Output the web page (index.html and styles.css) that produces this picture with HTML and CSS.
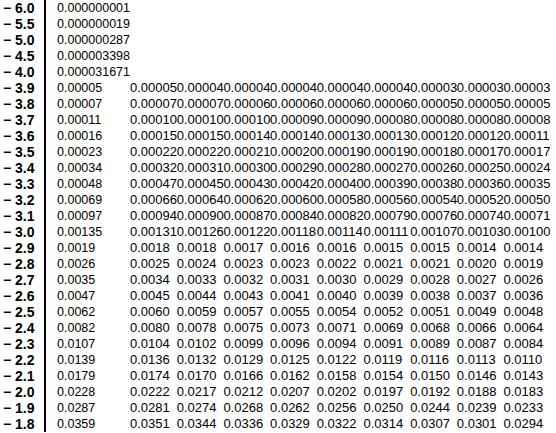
FILE: index.html
```html
<!DOCTYPE html>
<html>
<head>
<meta charset="utf-8">
<link rel="stylesheet" href="styles.css">
</head>
<body>
<div class="ztable" id="zt"></div>
<script>
var rows = [
["6.0","0.000000001"],
["5.5","0.000000019"],
["5.0","0.000000287"],
["4.5","0.000003398"],
["4.0","0.000031671"],
["3.9","0.00005 0.00005 0.00004 0.00004 0.00004 0.00004 0.00004 0.00003 0.00003 0.00003"],
["3.8","0.00007 0.00007 0.00007 0.00006 0.00006 0.00006 0.00006 0.00005 0.00005 0.00005"],
["3.7","0.00011 0.00010 0.00010 0.00010 0.00009 0.00009 0.00008 0.00008 0.00008 0.00008"],
["3.6","0.00016 0.00015 0.00015 0.00014 0.00014 0.00013 0.00013 0.00012 0.00012 0.00011"],
["3.5","0.00023 0.00022 0.00022 0.00021 0.00020 0.00019 0.00019 0.00018 0.00017 0.00017"],
["3.4","0.00034 0.00032 0.00031 0.00030 0.00029 0.00028 0.00027 0.00026 0.00025 0.00024"],
["3.3","0.00048 0.00047 0.00045 0.00043 0.00042 0.00040 0.00039 0.00038 0.00036 0.00035"],
["3.2","0.00069 0.00066 0.00064 0.00062 0.00060 0.00058 0.00056 0.00054 0.00052 0.00050"],
["3.1","0.00097 0.00094 0.00090 0.00087 0.00084 0.00082 0.00079 0.00076 0.00074 0.00071"],
["3.0","0.00135 0.00131 0.00126 0.00122 0.00118 0.00114 0.00111 0.00107 0.00103 0.00100"],
["2.9","0.0019 0.0018 0.0018 0.0017 0.0016 0.0016 0.0015 0.0015 0.0014 0.0014"],
["2.8","0.0026 0.0025 0.0024 0.0023 0.0023 0.0022 0.0021 0.0021 0.0020 0.0019"],
["2.7","0.0035 0.0034 0.0033 0.0032 0.0031 0.0030 0.0029 0.0028 0.0027 0.0026"],
["2.6","0.0047 0.0045 0.0044 0.0043 0.0041 0.0040 0.0039 0.0038 0.0037 0.0036"],
["2.5","0.0062 0.0060 0.0059 0.0057 0.0055 0.0054 0.0052 0.0051 0.0049 0.0048"],
["2.4","0.0082 0.0080 0.0078 0.0075 0.0073 0.0071 0.0069 0.0068 0.0066 0.0064"],
["2.3","0.0107 0.0104 0.0102 0.0099 0.0096 0.0094 0.0091 0.0089 0.0087 0.0084"],
["2.2","0.0139 0.0136 0.0132 0.0129 0.0125 0.0122 0.0119 0.0116 0.0113 0.0110"],
["2.1","0.0179 0.0174 0.0170 0.0166 0.0162 0.0158 0.0154 0.0150 0.0146 0.0143"],
["2.0","0.0228 0.0222 0.0217 0.0212 0.0207 0.0202 0.0197 0.0192 0.0188 0.0183"],
["1.9","0.0287 0.0281 0.0274 0.0268 0.0262 0.0256 0.0250 0.0244 0.0239 0.0233"],
["1.8","0.0359 0.0351 0.0344 0.0336 0.0329 0.0322 0.0314 0.0307 0.0301 0.0294"]
];
var t = document.getElementById('zt');
rows.forEach(function(r){
  var row = document.createElement('div');
  row.className = 'zrow';
  var lab = document.createElement('div');
  lab.className = 'zlabel';
  lab.textContent = '\u2212 ' + r[0];
  row.appendChild(lab);
  r[1].split(' ').forEach(function(v, i){
    var c = document.createElement('div');
    c.className = i === 0 ? 'zfirst' : 'zcell';
    c.textContent = v;
    row.appendChild(c);
  });
  t.appendChild(row);
});
</script>
</body>
</html>
```
FILE: styles.css
```css
html, body {
  margin: 0;
  padding: 0;
  background: #fff;
}
.ztable {
  font-family: "Liberation Sans", Arial, sans-serif;
  font-size: 13px;
  color: #000;
  display: flex;
  flex-direction: column;
}
.zrow {
  display: grid;
  grid-template-columns: 46px 84px repeat(9, 46.7px);
  height: 16px;
  line-height: 16px;
}
.zlabel {
  box-sizing: border-box;
  border-right: 2px solid #000;
  padding-left: 3px;
  font-size: 14px;
  font-weight: bold;
  white-space: nowrap;
}
.zfirst {
  padding-left: 11px;
  font-size: 12.5px;
  white-space: nowrap;
}
.zcell {
  white-space: nowrap;
}
```
